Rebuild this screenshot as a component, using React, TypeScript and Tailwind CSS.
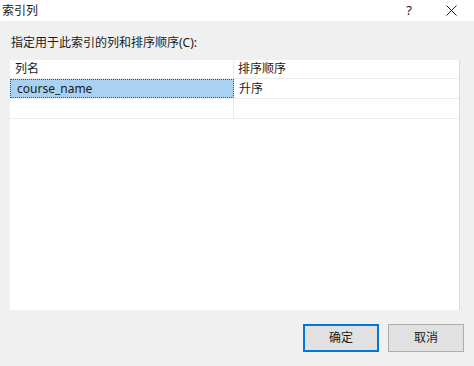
export default function App() {
  const font = { fontFamily: '"Noto Sans", "Noto Sans CJK SC", sans-serif' };
  return (
    <div className="w-[474px] h-[366px] flex flex-col bg-[#f0f0f0] text-[12px] text-[#1a1a1a]" style={font}>
      {/* 标题栏 */}
      <div className="h-[21px] bg-white flex items-center pl-[2px] shrink-0">
        <span className="text-[12px] leading-none">索引列</span>
        <span className="ml-auto text-[13px] leading-none mr-[34px]">?</span>
        <svg width="11" height="11" viewBox="0 0 11 11" className="mr-[17px]">
          <path d="M0.5 0.5 L10.5 10.5 M10.5 0.5 L0.5 10.5" stroke="#1a1a1a" strokeWidth="1" />
        </svg>
      </div>

      <div className="flex-1 flex flex-col px-[10px]">
        <div className="h-[39px] flex items-center pl-[1px] pt-[4px]">
          指定用于此索引的列和排序顺序(C):
        </div>

        {/* 列表 */}
        <div className="h-[250px] mr-[4px] bg-white border-r border-[#dcdcdc] flex flex-col">
          <div className="h-[19px] flex border-b border-[#ececec]">
            <div className="w-[224px] border-r border-[#ececec] pl-[5px] flex items-center">列名</div>
            <div className="flex-1 pl-[4px] flex items-center">排序顺序</div>
          </div>
          <div className="h-[20px] flex border-b border-[#ececec]">
            <div className="w-[224px] bg-[#a8d1f2] border border-dotted border-[#3a5a7a] pl-[6px] flex items-center">
              course_name
            </div>
            <div className="flex-1 pl-[5px] flex items-center">升序</div>
          </div>
          <div className="h-[20px] flex border-b border-[#ececec]">
            <div className="w-[224px] border-r border-[#ececec]" />
            <div className="flex-1" />
          </div>
        </div>

        {/* 按钮 */}
        <div className="flex justify-end gap-[9px] mt-[14px]">
          <button className="w-[76px] h-[28px] bg-[#e1e1e1] border-2 border-[#0078d7] text-[12px]">确定</button>
          <button className="w-[76px] h-[28px] bg-[#e1e1e1] border border-[#adadad] text-[12px]">取消</button>
        </div>
      </div>
    </div>
  );
}
